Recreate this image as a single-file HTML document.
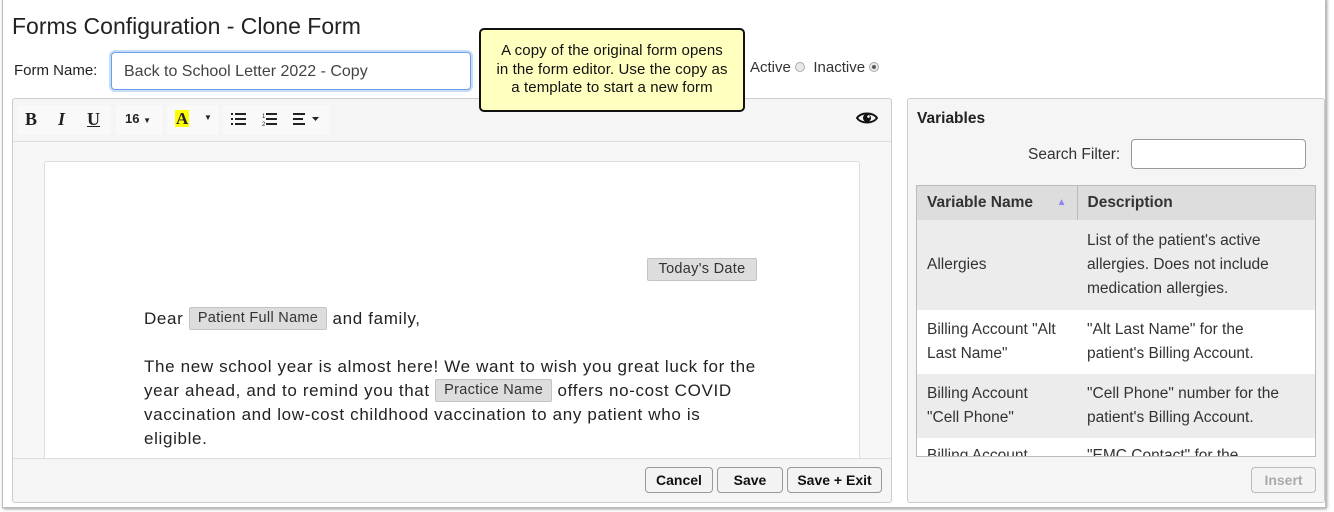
<!DOCTYPE html>
<html><head><style>
*{box-sizing:border-box;margin:0;padding:0}
body{width:1334px;height:512px;background:#fff;font-family:"Liberation Sans",Arial,sans-serif;color:#222;position:relative;overflow:hidden}
.a{position:absolute}
.outer{left:2px;top:-2px;width:1324px;height:510px;border:1px solid #bbb;box-shadow:1px 1px 3px #999}
h1{position:absolute;left:12px;top:13px;font-size:23px;font-weight:normal;color:#222}
.tip{left:479px;top:28px;width:266px;height:84px;background:#ffffc0;border:2px solid #111;border-radius:5px;font-size:15px;text-align:center;line-height:18.5px;padding-top:12px;color:#111;z-index:5;letter-spacing:0.1px}
.panel{border:1px solid #ccc;border-radius:3px;background:#f5f5f5}
.tb{background:#f9f9f9;border-radius:3px;height:30px;top:105px}
.ph{background:#ddd;border:1px solid #c4c4c4;border-radius:2px;font-size:14.5px;padding:0 8px;height:23px;line-height:21px;color:#333;display:inline-block;letter-spacing:0.3px}
.ln{position:absolute;left:144px;font-size:17px;line-height:24px;height:24px;white-space:nowrap;color:#222;letter-spacing:0.65px}
.ln .ph{vertical-align:top;margin-top:0px}
.btn{border:1px solid #999;border-radius:4px;background:#f3f3f3;font-size:14px;font-weight:bold;height:26px;line-height:24px;text-align:center;top:467px;color:#111}
td{font-size:15.5px;color:#333;padding:0 10px;vertical-align:middle;line-height:24px}
</style></head><body>
<div class="a outer"></div>
<h1>Forms Configuration - Clone Form</h1>
<div class="a" style="left:14px;top:62px;font-size:15px;color:#222">Form Name:</div>
<div class="a" style="left:111px;top:52px;width:360px;height:38px;border:1px solid #6aa0e8;border-radius:4px;box-shadow:0 0 0 2px #c7dcf7;font-size:16px;color:#444;padding:10px 12px">Back to School Letter 2022 - Copy</div>
<div class="a tip">A copy of the original form opens<br>in the form editor. Use the copy as<br>a template to start a new form</div>
<div class="a" style="left:750px;top:59px;font-size:15px;color:#333">Active <span style="display:inline-block;width:10px;height:10px;border:1px solid #aaa;border-radius:50%;background:#e8e8e8"></span>&nbsp;&nbsp;Inactive <span style="display:inline-block;width:10px;height:10px;border:1px solid #aaa;border-radius:50%;background:radial-gradient(#555 30%,#e8e8e8 40%)"></span></div>

<div class="a panel" style="left:12px;top:98px;width:880px;height:405px"></div>
<div class="a" style="left:13px;top:141px;width:878px;height:1px;background:#ddd"></div>
<div class="a tb" style="left:17px;width:94px"></div>
<div class="a tb" style="left:116px;width:46px"></div>
<div class="a tb" style="left:167px;width:51px"></div>
<div class="a tb" style="left:223px;width:106px"></div>
<div class="a" style="left:25px;top:109px;font:bold 18px 'Liberation Serif',serif">B</div>
<div class="a" style="left:58px;top:109px;font:italic bold 18px 'Liberation Serif',serif">I</div>
<div class="a" style="left:87px;top:109px;font:bold 18px 'Liberation Serif',serif;text-decoration:underline">U</div>
<div class="a" style="left:125px;top:111px;font-size:13px;font-weight:bold">16 <span style="font-size:8px">▼</span></div>
<div class="a" style="left:175px;top:110px;background:#ff0;font:bold 17px 'Liberation Serif',serif;padding:0 1px;line-height:17px">A</div>
<div class="a" style="left:204px;top:113px;font-size:8px">▼</div>
<svg class="a" style="left:231px;top:112px" width="16" height="14"><g fill="#222"><rect x="0" y="1" width="2" height="2"/><rect x="0" y="6" width="2" height="2"/><rect x="0" y="11" width="2" height="2"/><rect x="4" y="1" width="11" height="2"/><rect x="4" y="6" width="11" height="2"/><rect x="4" y="11" width="11" height="2"/></g></svg>
<svg class="a" style="left:262px;top:112px" width="16" height="14"><g fill="#222"><text x="0" y="6" font-size="6">1</text><text x="0" y="14" font-size="6">2</text><rect x="4" y="1" width="11" height="2"/><rect x="4" y="6" width="11" height="2"/><rect x="4" y="11" width="11" height="2"/></g></svg>
<svg class="a" style="left:293px;top:113px" width="28" height="12"><g fill="#222"><rect x="0" y="0" width="12" height="2"/><rect x="0" y="5" width="10" height="2"/><rect x="0" y="10" width="12" height="2"/><path d="M19 4h7l-3.5 4z"/></g></svg>
<svg class="a" style="left:856px;top:110px" width="22" height="16"><path d="M1 8C5 2 17 2 21 8C17 14 5 14 1 8Z" fill="none" stroke="#111" stroke-width="2"/><circle cx="11" cy="8" r="4" fill="#111"/><circle cx="12.5" cy="6.5" r="1.3" fill="#fff"/></svg>
<div class="a" style="left:13px;top:142px;width:878px;height:316px;background:#f7f7f7"></div>
<div class="a" style="left:44px;top:161px;width:816px;height:297px;background:#fff;border:1px solid #ddd;border-bottom:none;border-radius:3px 3px 0 0"></div>
<div class="a ph" style="left:647px;top:258px;width:110px;text-align:center">Today's Date</div>
<div class="ln" style="top:307px">Dear <span class="ph">Patient Full Name</span> and family,</div>
<div class="ln" style="top:355px">The new school year is almost here! We want to wish you great luck for the</div>
<div class="ln" style="top:379px">year ahead, and to remind you that <span class="ph">Practice Name</span> offers no-cost COVID</div>
<div class="ln" style="top:403px">vaccination and low-cost childhood vaccination to any patient who is</div>
<div class="ln" style="top:427px">eligible.</div>
<div class="a" style="left:13px;top:458px;width:878px;height:1px;background:#ddd"></div>
<div class="a btn" style="left:645px;width:68px">Cancel</div>
<div class="a btn" style="left:717px;width:66px">Save</div>
<div class="a btn" style="left:787px;width:95px">Save + Exit</div>

<div class="a panel" style="left:907px;top:98px;width:418px;height:405px"></div>
<div class="a" style="left:917px;top:110px;font-size:15.5px;font-weight:bold;color:#222">Variables</div>
<div class="a" style="left:1028px;top:146px;font-size:15.5px;color:#333">Search Filter:</div>
<div class="a" style="left:1131px;top:139px;width:175px;height:30px;background:#fff;border:1px solid #999;border-radius:4px"></div>
<div class="a" style="left:916px;top:185px;width:400px;height:272px;background:#fff;border:1px solid #bbb;overflow:hidden">
<table style="border-collapse:collapse;width:398px;table-layout:fixed">
<tr style="height:34px;background:#ddd"><td style="width:160px;border-right:1px solid #bbb;font-weight:bold">Variable Name <span style="float:right;color:#88e;font-size:10px">▲</span></td><td style="font-weight:bold">Description</td></tr>
<tr style="height:90px;background:#ececec"><td>Allergies</td><td>List of the patient's active<br>allergies. Does not include<br>medication allergies.</td></tr>
<tr style="height:64px"><td>Billing Account "Alt<br>Last Name"</td><td>"Alt Last Name" for the<br>patient's Billing Account.</td></tr>
<tr style="height:64px;background:#ececec"><td>Billing Account<br>"Cell Phone"</td><td>"Cell Phone" number for the<br>patient's Billing Account.</td></tr>
<tr style="height:64px"><td style="vertical-align:top;padding-top:6px">Billing Account</td><td style="vertical-align:top;padding-top:6px">"EMC Contact" for the</td></tr>
</table></div>
<div class="a btn" style="left:1251px;width:65px;color:#aaa;border-color:#bbb">Insert</div>
</body></html>
